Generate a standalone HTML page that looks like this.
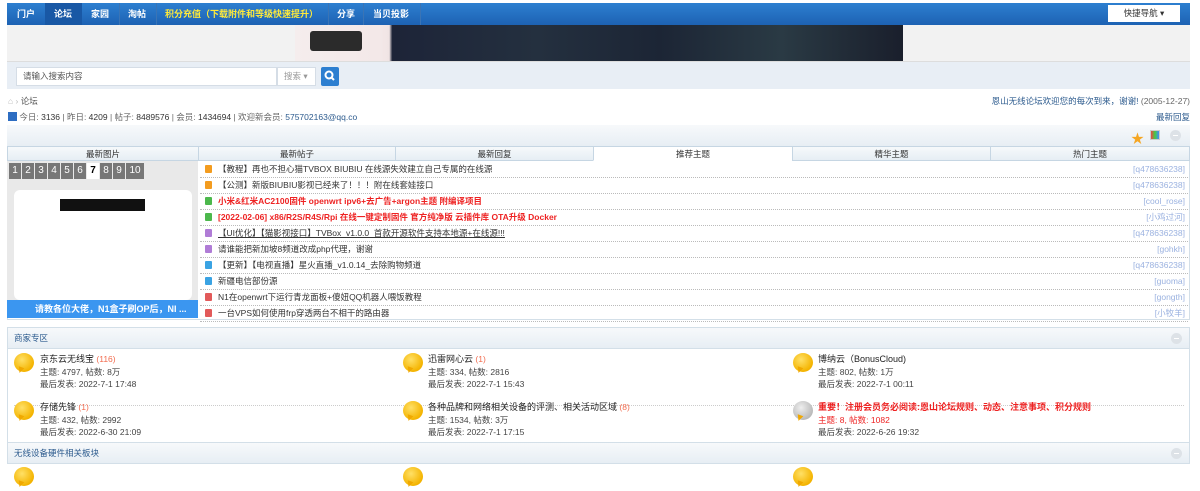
<!DOCTYPE html>
<html><head><meta charset="utf-8"><style>
*{margin:0;padding:0;box-sizing:border-box}
body{width:1200px;height:473px;overflow:hidden;background:#fff;font:8.5px "Liberation Sans","Noto Sans CJK SC",sans-serif;color:#333;position:relative}
.a{position:absolute}
.nav{left:7px;top:3px;width:1183px;height:22px;background:linear-gradient(#2d7fd0,#1d62b3);}
.nav span{position:absolute;top:0;height:22px;line-height:22px;color:#fff;font-weight:bold;font-size:9px;white-space:nowrap}
.sep{position:absolute;top:0;width:1px;height:22px;background:#3a74b5}
.tab{position:absolute;top:146px;height:15px;line-height:14px;text-align:center;background:linear-gradient(#f6f9fb,#e6eef4);border:1px solid #c6d6e3;font-size:8.5px;color:#333}
.row{position:absolute;left:200px;width:988px;height:16px;line-height:15px;border-bottom:1px dotted #bbb;font-size:8.5px}
.row i{display:inline-block;width:7px;height:8px;margin:0 6px 0 5px;vertical-align:-1px;border-radius:1px}
.row b.r{position:absolute;right:3px;font-weight:normal;color:#9bb2e0}
.hd{position:absolute;left:7px;width:1183px;height:22px;background:linear-gradient(#f7f9fb,#e7eef4);border:1px solid #d3dfe8;line-height:20px;padding-left:6px;color:#2d5b8e;font-size:8.5px}
.f{position:absolute;font-size:8.5px;line-height:12.5px;color:#444}
.f b{font-weight:normal;color:#222;font-size:9px}
.f .n{color:#f26c4f}
.ic{position:absolute;width:20px;height:19px;border-radius:50%;background:radial-gradient(circle at 40% 35%,#ffe066,#f4b400 70%,#e09a00)}
.ic:after{content:"";position:absolute;left:3px;bottom:-4px;border:3px solid transparent;border-top:6px solid #f0a800;transform:rotate(20deg)}
.mn{position:absolute;width:11px;height:11px;border-radius:50%;background:#dde2e7}
.mn:after{content:"";position:absolute;left:3px;top:5px;width:5px;height:1px;background:#fff}
</style></head><body>
<div class="a nav">
<div class="a" style="left:38px;top:0;width:37px;height:22px;background:#1958a5"></div>
<span style="left:10px">门户</span>
<span style="left:47px">论坛</span>
<span style="left:84px">家园</span><div class="sep" style="left:112px"></div>
<span style="left:121px">淘帖</span><div class="sep" style="left:149px"></div>
<span style="left:158px;color:#ffea3a">积分充值（下载附件和等级快速提升）</span><div class="sep" style="left:321px"></div>
<span style="left:330px">分享</span><div class="sep" style="left:356px"></div>
<span style="left:366px">当贝投影</span><div class="sep" style="left:413px"></div>
<div class="a" style="right:10px;top:2px;width:72px;height:17px;background:#fff;color:#333;font-size:8.5px;line-height:17px;text-align:center">快捷导航 ▾</div>
</div>
<div class="a" style="left:7px;top:25px;width:1183px;height:37px;background:#f2f2f2;border-bottom:1px solid #ddd"></div>
<div class="a" style="left:295px;top:25px;width:608px;height:36px;background:linear-gradient(90deg,#f5eded 0,#f3e8e8 14%,#f0e4e4 15.5%,#1d2438 16%,#24303f 40%,#1c2535 60%,#2a3a44 80%,#1a1f2c 100%)"></div>
<div class="a" style="left:310px;top:31px;width:52px;height:20px;background:#2b2b2b;border-radius:3px"></div>
<div class="a" style="left:7px;top:62px;width:1183px;height:27px;background:#e8eef5"></div>
<div class="a" style="left:16px;top:67px;width:261px;height:19px;background:#fff;border:1px solid #d5dde6;font-size:8.5px;line-height:17px;padding-left:6px;color:#555">请输入搜索内容</div>
<div class="a" style="left:277px;top:67px;width:39px;height:19px;background:#fff;border:1px solid #d5dde6;font-size:8.5px;line-height:17px;padding-left:6px;color:#999">搜索 ▾</div>
<div class="a" style="left:321px;top:67px;width:18px;height:19px;background:#2d7fd0;border-radius:2px"><svg width="18" height="19"><circle cx="8" cy="8" r="3.5" stroke="#fff" stroke-width="2" fill="none"/><path d="M10.5 10.5L13 13" stroke="#fff" stroke-width="2"/></svg></div>
<div class="a" style="left:8px;top:95px;font-size:8.5px;color:#555"><span style="color:#bbb">⌂</span> <span style="color:#bbb">›</span> 论坛</div>
<div class="a" style="left:8px;top:111px;font-size:8.5px;color:#666"><span style="display:inline-block;width:9px;height:9px;background:#2d6dc2;vertical-align:-1px"></span> 今日: <span style="color:#333">3136</span> | 昨日: <span style="color:#333">4209</span> | 帖子: <span style="color:#333">8489576</span> | 会员: <span style="color:#333">1434694</span> | 欢迎新会员: <span style="color:#2d5b8e">575702163@qq.co</span></div>
<div class="a" style="right:10px;top:95px;font-size:8.5px;color:#2d5b8e">恩山无线论坛欢迎您的每次到来，谢谢! <span style="color:#666">(2005-12-27)</span></div>
<div class="a" style="right:10px;top:111px;font-size:8.5px;color:#2d5b8e">最新回复</div>
<div class="a" style="left:7px;top:125px;width:1183px;height:195px;border:1px solid #d3dfe8"></div>
<div class="a" style="left:7px;top:125px;width:1183px;height:21px;background:linear-gradient(#f7f9fb,#e7eef4)"></div>
<div class="a" style="left:1131px;top:128px;color:#f5a623;font-size:13px">★</div>
<div class="a" style="left:1150px;top:130px;width:10px;height:10px;background:linear-gradient(90deg,#e44,#4c4,#48f);border:1px solid #ccc"></div>
<div class="mn" style="left:1170px;top:130px"></div>
<div class="tab" style="left:7px;width:192px">最新图片</div>
<div class="tab" style="left:198px;width:198px">最新帖子</div>
<div class="tab" style="left:395px;width:199px">最新回复</div>
<div class="tab" style="left:593px;width:200px;background:#fff;border-bottom-color:#fff">推荐主题</div>
<div class="tab" style="left:792px;width:199px">精华主题</div>
<div class="tab" style="left:990px;width:200px">热门主题</div>
<div class="a" style="left:7px;top:161px;width:191px;height:157px;background:#e9e9e9"></div>
<div class="a" style="left:14px;top:190px;width:178px;height:110px;background:#fff;border-radius:6px"></div>
<div class="a" style="left:60px;top:199px;width:85px;height:12px;background:#111"></div>
<div class="a" style="left:9px;top:163px;font-size:10px;color:#fff;line-height:16px">
<span style="display:inline-block;width:12px;background:#777;text-align:center;margin-right:1px">1</span><span style="display:inline-block;width:12px;background:#777;text-align:center;margin-right:1px">2</span><span style="display:inline-block;width:12px;background:#777;text-align:center;margin-right:1px">3</span><span style="display:inline-block;width:12px;background:#777;text-align:center;margin-right:1px">4</span><span style="display:inline-block;width:12px;background:#777;text-align:center;margin-right:1px">5</span><span style="display:inline-block;width:12px;background:#777;text-align:center;margin-right:1px">6</span><span style="display:inline-block;width:12px;background:#fff;color:#000;font-weight:bold;text-align:center;margin-right:1px">7</span><span style="display:inline-block;width:12px;background:#777;text-align:center;margin-right:1px">8</span><span style="display:inline-block;width:12px;background:#777;text-align:center;margin-right:1px">9</span><span style="display:inline-block;width:18px;background:#777;text-align:center">10</span></div>
<div class="a" style="left:7px;top:300px;width:191px;height:18px;background:#3b96f0;color:#fff;font-weight:bold;font-size:9px;line-height:18px;padding-left:28px">请教各位大佬，N1盒子刷OP后，NI ...</div>
<div class="row" style="top:162px"><i style="background:#f39c1f"></i>【教程】再也不担心猫TVBOX BIUBIU 在线源失效建立自己专属的在线源<b class="r">[q478636238]</b></div>
<div class="row" style="top:178px"><i style="background:#f39c1f"></i>【公测】新版BIUBIU影视已经来了！！！附在线套娃接口<b class="r">[q478636238]</b></div>
<div class="row" style="top:194px;color:#e22;font-weight:bold"><i style="background:#4cb84c"></i>小米&amp;红米AC2100固件 openwrt ipv6+去广告+argon主题 附编译项目<b class="r">[cool_rose]</b></div>
<div class="row" style="top:210px;color:#e22;font-size:8.5px;font-weight:bold"><i style="background:#4cb84c"></i>[2022-02-06] x86/R2S/R4S/Rpi 在线一键定制固件 官方纯净版 云插件库 OTA升级 Docker<b class="r">[小鸡过河]</b></div>
<div class="row" style="top:226px"><i style="background:#b07cd6"></i><u>【UI优化】【猫影视接口】TVBox_v1.0.0_首款开源软件支持本地源+在线源!!!</u><b class="r">[q478636238]</b></div>
<div class="row" style="top:242px"><i style="background:#b07cd6"></i>请谁能把新加坡8频道改成php代理，谢谢<b class="r">[gohkh]</b></div>
<div class="row" style="top:258px"><i style="background:#3aa3e3"></i>【更新】【电视直播】星火直播_v1.0.14_去除购物频道<b class="r">[q478636238]</b></div>
<div class="row" style="top:274px"><i style="background:#3aa3e3"></i>新疆电信部份源<b class="r">[guoma]</b></div>
<div class="row" style="top:290px"><i style="background:#e25a5a"></i>N1在openwrt下运行青龙面板+傻妞QQ机器人喂饭教程<b class="r">[gongth]</b></div>
<div class="row" style="top:306px"><i style="background:#e25a5a"></i>一台VPS如何使用frp穿透两台不相干的路由器<b class="r">[小牧羊]</b></div>
<div class="hd" style="top:327px">商家专区</div><div class="mn" style="left:1171px;top:333px"></div>
<div class="a" style="left:7px;top:349px;width:1183px;height:93px;border-left:1px solid #d3dfe8;border-right:1px solid #d3dfe8"></div>
<div class="a" style="left:14px;top:405px;width:1170px;border-top:1px dotted #ccc"></div>
<div class="ic" style="left:14px;top:353px"></div>
<div class="f" style="left:40px;top:353px"><b>京东云无线宝</b> <span class="n">(116)</span><br>主题: 4797, 帖数: 8万<br>最后发表: 2022-7-1 17:48</div>
<div class="ic" style="left:403px;top:353px"></div>
<div class="f" style="left:428px;top:353px"><b>迅雷网心云</b> <span class="n">(1)</span><br>主题: 334, 帖数: 2816<br>最后发表: 2022-7-1 15:43</div>
<div class="ic" style="left:793px;top:353px"></div>
<div class="f" style="left:818px;top:353px"><b>博纳云（BonusCloud)</b><br>主题: 802, 帖数: 1万<br>最后发表: 2022-7-1 00:11</div>
<div class="ic" style="left:14px;top:401px"></div>
<div class="f" style="left:40px;top:401px"><b>存储先锋</b> <span class="n">(1)</span><br>主题: 432, 帖数: 2992<br>最后发表: 2022-6-30 21:09</div>
<div class="ic" style="left:403px;top:401px"></div>
<div class="f" style="left:428px;top:401px"><b>各种品牌和网络相关设备的评测、相关活动区域</b> <span class="n">(8)</span><br>主题: 1534, 帖数: 3万<br>最后发表: 2022-7-1 17:15</div>
<div class="ic" style="left:793px;top:401px;background:radial-gradient(circle at 40% 35%,#eee,#bbb 70%,#aaa)"></div>
<div class="f" style="left:818px;top:401px;color:#e22"><b style="color:#e22;font-weight:bold">重要！注册会员务必阅读:恩山论坛规则、动态、注意事项、积分规则</b><br>主题: 8, 帖数: 1082<br><span style="color:#444">最后发表: 2022-6-26 19:32</span></div>
<div class="hd" style="top:442px">无线设备硬件相关板块</div><div class="mn" style="left:1171px;top:448px"></div>
<div class="ic" style="left:14px;top:467px"></div><div class="ic" style="left:403px;top:467px"></div><div class="ic" style="left:793px;top:467px"></div>
</body></html>
